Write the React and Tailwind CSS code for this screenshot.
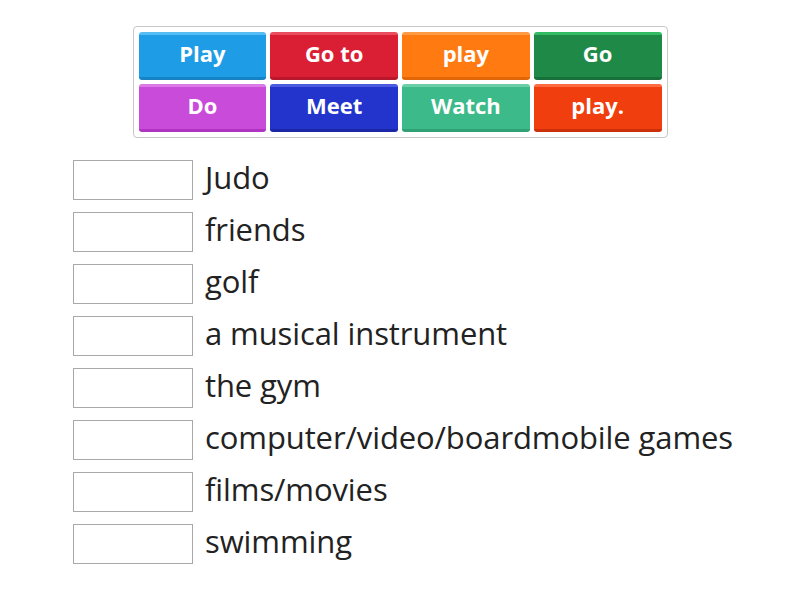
import React from 'react';

const tiles = [
    { label: 'Play', cls: 'bg-[#1e9de6] border-t-[#55bdf3] border-b-[#1683c6]' },
    { label: 'Go to', cls: 'bg-[#da1f35] border-t-[#ea4d5e] border-b-[#b8182b]' },
    { label: 'play', cls: 'bg-[#ff7b12] border-t-[#ff9a45] border-b-[#e06608]' },
    { label: 'Go', cls: 'bg-[#1f8a47] border-t-[#31bc64] border-b-[#17703a]' },
    { label: 'Do', cls: 'bg-[#c94bd9] border-t-[#db7ae6] border-b-[#b034c2]' },
    { label: 'Meet', cls: 'bg-[#2234cc] border-t-[#4a5be0] border-b-[#1a28a8]' },
    { label: 'Watch', cls: 'bg-[#3dba89] border-t-[#6acfa6] border-b-[#2fa175]' },
    { label: 'play.', cls: 'bg-[#f13e0f] border-t-[#ff6a40] border-b-[#cc300a]' },
];

const items = [
    'Judo',
    'friends',
    'golf',
    'a musical instrument',
    'the gym',
    'computer/video/boardmobile games',
    'films/movies',
    'swimming',
];

export default function App() {
    return (
        <div className="w-[800px] h-[600px] bg-white font-['Open_Sans',sans-serif] overflow-hidden">
            <div className="pt-[26px] flex justify-center">
                <div className="w-[535px] border border-[#c8c8c8] rounded-[4px] p-[5px] grid grid-cols-4 gap-[4px]">
                    {tiles.map((t) => (
                        <div
                            key={t.label}
                            className={`h-[48px] rounded-[3px] border-t-[3px] border-b-[3px] pb-[5px] flex items-center justify-center text-white font-bold text-[22px] ${t.cls}`}
                        >
                            {t.label}
                        </div>
                    ))}
                </div>
            </div>

            <div className="pl-[73px] pt-[22px] flex flex-col gap-[12px]">
                {items.map((text) => (
                    <div key={text} className="flex items-center h-[40px]">
                        <div className="w-[120px] h-[40px] border border-[#a8a8a8] bg-white shrink-0"></div>
                        <span className="ml-[12px] pb-[5px] text-[31px] tracking-[-0.1px] text-[#222] leading-none whitespace-nowrap">{text}</span>
                    </div>
                ))}
            </div>
        </div>
    );
}
